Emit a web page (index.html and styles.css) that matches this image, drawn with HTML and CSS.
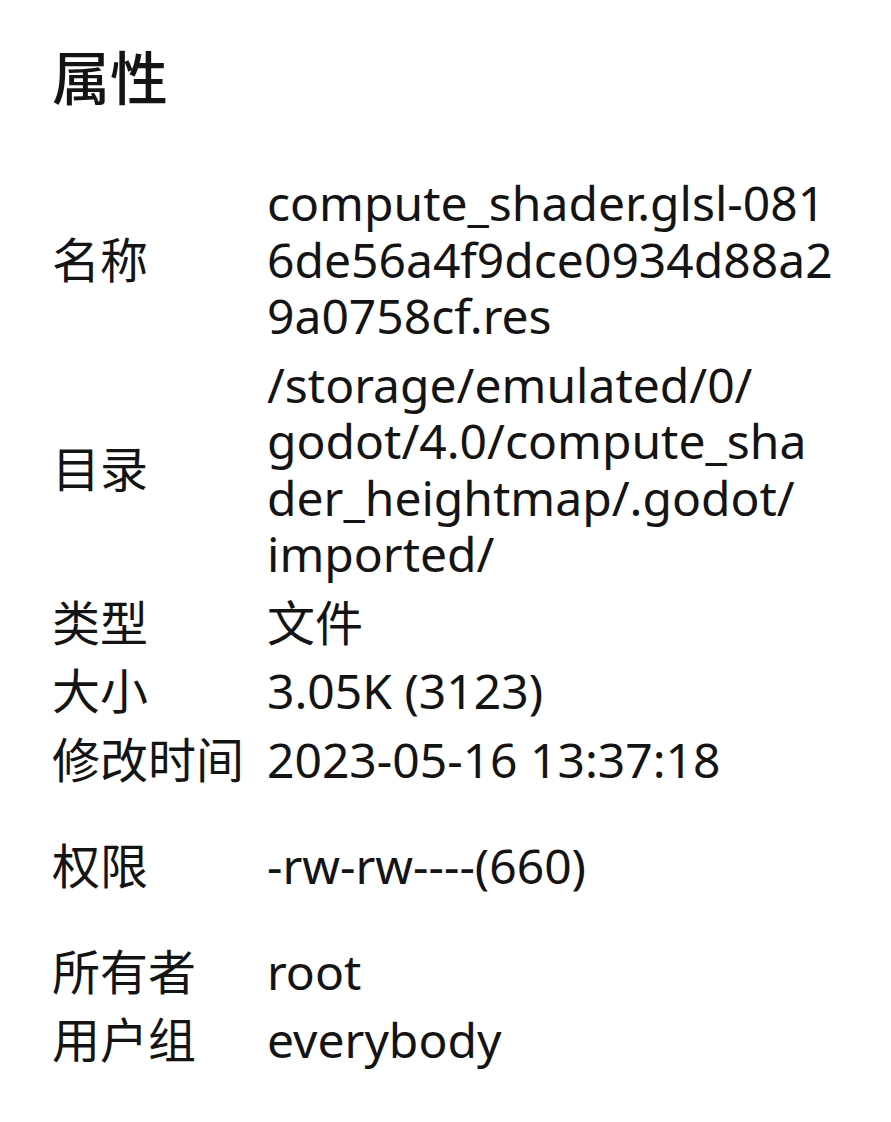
FILE: index.html
```html
<!DOCTYPE html>
<html lang="zh-CN">
<head>
<meta charset="utf-8">
<title>属性</title>
<link rel="stylesheet" href="styles.css">
</head>
<body>
<main class="sheet">
  <h1 class="title">属性</h1>
  <dl class="props">
    <div class="row">
      <dt class="label">名称</dt>
      <dd class="value">compute_shader.glsl-081<br>6de56a4f9dce0934d88a2<br>9a0758cf.res</dd>
    </div>
    <div class="row">
      <dt class="label">目录</dt>
      <dd class="value">/storage/emulated/0/<br>godot/4.0/compute_sha<br>der_heightmap/.godot/<br>imported/</dd>
    </div>
    <div class="row">
      <dt class="label">类型</dt>
      <dd class="value">文件</dd>
    </div>
    <div class="row">
      <dt class="label">大小</dt>
      <dd class="value">3.05K (3123)</dd>
    </div>
    <div class="row">
      <dt class="label">修改时间</dt>
      <dd class="value">2023-05-16 13:37:18</dd>
    </div>
    <div class="row row-spaced">
      <dt class="label">权限</dt>
      <dd class="value">-rw-rw----(660)</dd>
    </div>
    <div class="row">
      <dt class="label">所有者</dt>
      <dd class="value">root</dd>
    </div>
    <div class="row">
      <dt class="label">用户组</dt>
      <dd class="value">everybody</dd>
    </div>
  </dl>
</main>
</body>
</html>
```

FILE: styles.css
```css
html, body {
  margin: 0;
  padding: 0;
  background: #ffffff;
}

body {
  font-family: "Noto Sans", "Noto Sans CJK SC", sans-serif;
  color: #141414;
}

.sheet {
  padding: 49px 0 0 52px;
}

.title {
  margin: 0;
  font-size: 58px;
  line-height: 58px;
  font-weight: 500;
}

.props {
  margin: 62px 0 0 0;
  padding: 0;
}

.row {
  display: grid;
  grid-template-columns: 215px 1fr;
  align-items: center;
  padding: 6px 0;
  font-size: 48px;
  line-height: 56.5px;
}

.row-spaced {
  margin: 38px 0 37px 0;
}

.label {
  margin: 0;
  white-space: nowrap;
}

.value {
  margin: 0;
  white-space: nowrap;
}
```
